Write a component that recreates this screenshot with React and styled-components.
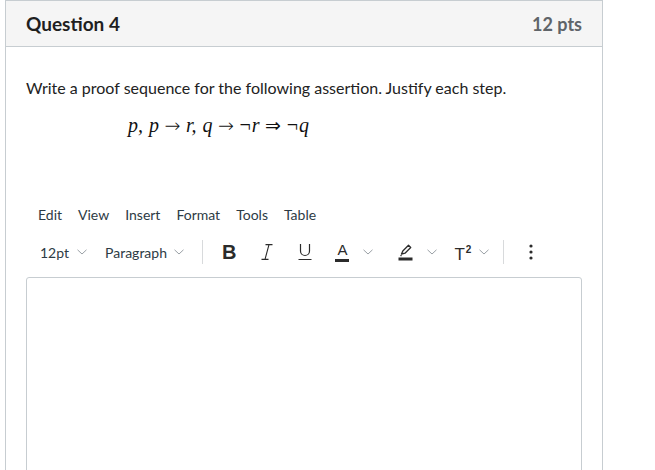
import React from "react";
import styled, { createGlobalStyle } from "styled-components";

const GlobalStyle = createGlobalStyle`
  body {
    margin: 0;
    background: #fff;
    font-family: Lato, "Noto Sans", sans-serif;
    color: #2d3b45;
  }
`;

const Card = styled.div`
  box-sizing: border-box;
  width: 598px;
  margin-left: 5px;
  border: 1px solid #c7cdd1;
  border-bottom: none;
`;

const Header = styled.header`
  display: flex;
  align-items: center;
  justify-content: space-between;
  height: 45px;
  padding: 0 20px;
  background: #f5f5f5;
  border-bottom: 1px solid #c7cdd1;
`;

const Title = styled.h2`
  margin: 0;
  font-size: 19px;
  font-weight: 700;
  color: #1f1f1f;
`;

const Points = styled.span`
  font-size: 18px;
  font-weight: 700;
  color: #5f6469;
`;

const Body = styled.div`
  padding: 31px 20px 0;
`;

const Prompt = styled.p`
  margin: 0;
  font-size: 16px;
  line-height: 20px;
  color: #222;
`;

const MathLine = styled.div`
  display: flex;
  align-items: baseline;
  margin-top: 16px;
  padding-left: 102px;
  font-family: "Liberation Serif", "DejaVu Serif", serif;
  font-style: italic;
  font-size: 20px;
  color: #111;
`;

const Var = styled.span`
  margin-left: ${({ $ml }) => $ml || 0}px;
`;

const Arrow = styled.span`
  display: inline-block;
  width: ${({ $w }) => $w || 17}px;
  margin: 0 ${({ $gap }) => $gap ?? 5}px;
  text-align: center;
  font-style: normal;
  font-family: "DejaVu Sans", sans-serif;
  font-size: 19px;
  font-weight: 300;
`;

const Neg = styled.span`
  display: inline-block;
  margin-right: 1px;
  font-style: normal;
  font-family: "Liberation Serif", serif;
  font-size: 20px;
`;

const Editor = styled.div`
  margin-top: 69px;
`;

const MenuBar = styled.nav`
  display: flex;
  gap: 16px;
  padding-left: 12px;
  font-size: 14px;
  color: #2d3b45;
`;

const MenuItem = styled.span``;

const Toolbar = styled.div`
  display: flex;
  align-items: center;
  height: 36px;
  margin-top: 11px;
  padding-left: 14px;
`;

const Dropdown = styled.div`
  display: flex;
  align-items: center;
  margin-left: ${({ $ml }) => $ml || 0}px;
  font-size: 14px;
  color: #2d3b45;
`;

const ChevronIcon = styled.svg`
  margin-left: ${({ $ml }) => $ml || 0}px;
  flex: none;
`;

const Chevron = ({ ml }) => (
  <ChevronIcon $ml={ml} width="10" height="6" viewBox="0 0 10 6">
    <path d="M0.5 0.8l4.5 4.2 4.5-4.2" fill="none" stroke="#9aa0a6" strokeWidth="1" />
  </ChevronIcon>
);

const Separator = styled.div`
  width: 1px;
  height: 24px;
  background: #d8dadc;
  margin-left: ${({ $ml }) => $ml || 0}px;
`;

const Tool = styled.div`
  display: flex;
  align-items: center;
  margin-left: ${({ $ml }) => $ml || 0}px;
  color: #2b2b2b;
  svg {
    display: block;
  }
`;

const BoldGlyph = styled.span`
  font-family: "Liberation Sans", Arial, sans-serif;
  font-weight: 700;
  font-size: 20px;
  line-height: 20px;
`;

const ColorGlyph = styled.span`
  position: relative;
  display: inline-block;
  width: 14px;
  text-align: center;
  font-family: "Liberation Sans", Arial, sans-serif;
  font-size: 15px;
  line-height: 15px;
  padding-bottom: 5px;
  &::after {
    content: "";
    position: absolute;
    left: 0;
    right: 0;
    bottom: 0;
    height: 3px;
    background: #2b2b2b;
  }
`;

const SuperGlyph = styled.span`
  font-family: "Liberation Sans", Arial, sans-serif;
  font-size: 17px;
  line-height: 18px;
  sup {
    font-size: 10px;
    font-weight: 700;
    vertical-align: 7px;
    margin-left: 1px;
  }
`;

const TextArea = styled.div`
  height: 240px;
  border: 1px solid #c7cdd1;
  border-radius: 3px;
  margin-top: 7px;
`;

const App = () => {
  return (
    <>
      <GlobalStyle />
      <Card>
        <Header>
          <Title>Question 4</Title>
          <Points>12 pts</Points>
        </Header>
        <Body>
          <Prompt>
            Write a proof sequence for the following assertion. Justify each step.
          </Prompt>
          <MathLine>
            <Var>p,</Var>
            <Var $ml={6}>p</Var>
            <Arrow>→</Arrow>
            <Var>r,</Var>
            <Var $ml={6}>q</Var>
            <Arrow>→</Arrow>
            <Neg>¬</Neg>
            <Var>r</Var>
            <Arrow $w={19} $gap={4}>⇒</Arrow>
            <Neg>¬</Neg>
            <Var>q</Var>
          </MathLine>
          <Editor>
            <MenuBar>
              <MenuItem>Edit</MenuItem>
              <MenuItem>View</MenuItem>
              <MenuItem>Insert</MenuItem>
              <MenuItem>Format</MenuItem>
              <MenuItem>Tools</MenuItem>
              <MenuItem>Table</MenuItem>
            </MenuBar>
            <Toolbar>
              <Dropdown>
                12pt <Chevron ml={8} />
              </Dropdown>
              <Dropdown $ml={18}>
                Paragraph <Chevron ml={7} />
              </Dropdown>
              <Separator $ml={18} />
              <Tool $ml={19}>
                <BoldGlyph>B</BoldGlyph>
              </Tool>
              <Tool $ml={25}>
                <svg width="12" height="16" viewBox="0 0 12 16">
                  <path
                    d="M4.5 0.6h7M0.5 15.4h7M8 0.6L4 15.4"
                    fill="none"
                    stroke="#2b2b2b"
                    strokeWidth="1.1"
                  />
                </svg>
              </Tool>
              <Tool $ml={25}>
                <svg width="14" height="18" viewBox="0 0 14 18">
                  <path
                    d="M2.5 1v7a4.5 4.5 0 0 0 9 0V1M0.5 16.5h13"
                    fill="none"
                    stroke="#2b2b2b"
                    strokeWidth="1.2"
                  />
                </svg>
              </Tool>
              <Tool $ml={23}>
                <ColorGlyph>A</ColorGlyph>
                <Chevron ml={14} />
              </Tool>
              <Tool $ml={25}>
                <svg width="15" height="18" viewBox="0 0 15 18">
                  <path
                    d="M3.5 11l1.3-3 5.7-5.7 2.2 2.2L7 10.2 3.5 11zM2.5 12.2l1 0.8"
                    fill="none"
                    stroke="#2b2b2b"
                    strokeWidth="1.3"
                    strokeLinejoin="round"
                  />
                  <rect x="0.5" y="14.5" width="14" height="3" fill="#2b2b2b" />
                </svg>
                <Chevron ml={14} />
              </Tool>
              <Tool $ml={17}>
                <SuperGlyph>
                  T<sup>2</sup>
                </SuperGlyph>
                <Chevron ml={8} />
              </Tool>
              <Separator $ml={14} />
              <Tool $ml={25}>
                <svg width="4" height="16" viewBox="0 0 4 16">
                  <circle cx="2" cy="2" r="1.6" fill="#2b2b2b" />
                  <circle cx="2" cy="8" r="1.6" fill="#2b2b2b" />
                  <circle cx="2" cy="14" r="1.6" fill="#2b2b2b" />
                </svg>
              </Tool>
            </Toolbar>
            <TextArea />
          </Editor>
        </Body>
      </Card>
    </>
  );
};

export default App;
